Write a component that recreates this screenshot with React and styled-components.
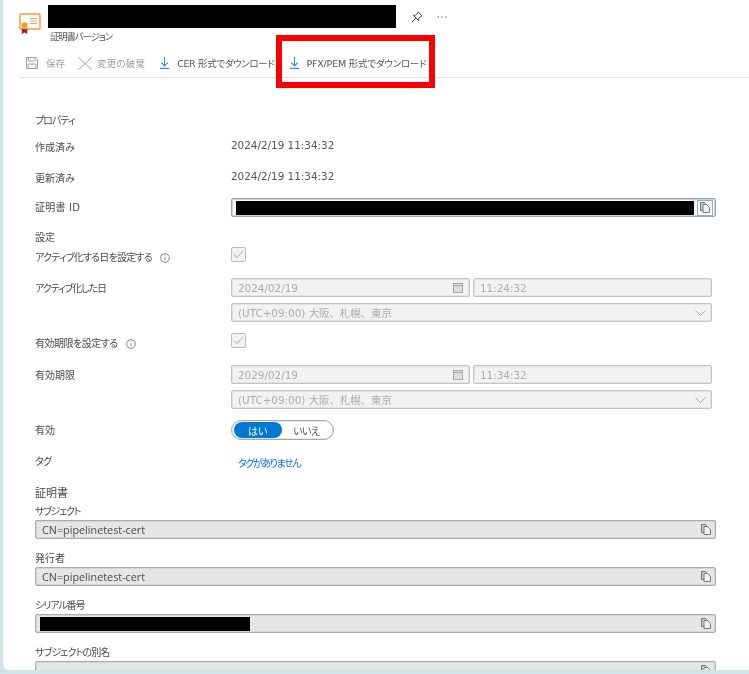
import React from "react";
import styled, { createGlobalStyle } from "styled-components";

const Global = createGlobalStyle`
  html, body { margin: 0; padding: 0; background: #cfe3e8; }
  body { width: 749px; height: 674px; overflow: hidden; }
  * { box-sizing: border-box; }
`;

const Page = styled.div`
  position: relative;
  width: 749px;
  height: 674px;
  background: #cfe3e8;
  overflow: hidden;
  font-family: "DejaVu Sans", "Noto Sans CJK JP", sans-serif;
  font-feature-settings: "palt";
  font-size: 10px;
  color: #4a4a4a;
`;

const Card = styled.div`
  margin-left: 3px;
  height: 670px;
  background: #fff;
  border-bottom-left-radius: 6px;
  overflow: hidden;
  filter: blur(0.35px);
`;

const Header = styled.header`
  display: flex;
  height: 50px;
  padding: 5px 0 0 16px;
`;

const CertBox = styled.div`
  width: 22px;
  margin: 8px 7px 0 0;
`;

const TitleBlock = styled.div`
  width: 348px;
`;

const RedactedTitle = styled.div`
  height: 23px;
  background: #000;
`;

const Subtitle = styled.div`
  margin: 2px 0 0 2px;
  font-size: 9.500px;
  letter-spacing: -1.2px;
  line-height: 14px;
  color: #5c5c5c;
`;

const HeaderActions = styled.div`
  display: flex;
  align-items: center;
  gap: 14px;
  height: 23px;
  margin-left: 15px;
  color: #444;
`;

const Toolbar = styled.nav`
  display: flex;
  align-items: center;
  height: 28px;
  margin-left: 17px;
  padding: 1px 0 2px 6px;
  border-bottom: 1px solid #e1e1e1;
`;

const ToolButton = styled.div`
  display: flex;
  align-items: center;
  gap: ${(p) => p.$gap}px;
  margin-right: ${(p) => p.$after || 0}px;
  font-size: 9.500px;
  letter-spacing: ${(p) => p.$ls || 0}px;
  white-space: nowrap;
  color: ${(p) => (p.$off ? "#a0a0a0" : "#555")};
`;

const Content = styled.main`
  padding: 32px 33px 0 32px;
`;

const SectionTitle = styled.h2`
  height: 20px;
  margin: ${(p) => p.$top || 0}px 0 ${(p) => p.$bottom || 0}px;
  padding-top: 1px;
  font-size: ${(p) => p.$size || 10}px;
  font-weight: 400;
  line-height: 20px;
  letter-spacing: ${(p) => p.$ls || 0}px;
  color: #4a4a4a;
`;

const Row = styled.div`
  display: grid;
  grid-template-columns: 196px 1fr;
  align-items: ${(p) => (p.$center ? "center" : "start")};
  height: ${(p) => (p.$h ? `${p.$h}px` : "auto")};
  margin-top: ${(p) => p.$top || 0}px;
`;

const Label = styled.div`
  display: flex;
  align-items: center;
  gap: 8px;
  font-size: 10px;
  letter-spacing: ${(p) => p.$ls || 0}px;
  line-height: ${(p) => p.$lh || 20}px;
  padding-top: ${(p) => (p.$pt || 0) + 1}px;
  color: #4a4a4a;
`;

const Value = styled.div`
  padding-bottom: 2px;
  font-size: 10.400px;
  line-height: 14px;
  color: #555;
`;

const IdField = styled.div`
  display: flex;
  align-items: center;
  height: 19px;
  padding: 0 2px 0 4px;
  background: #fff;
  border: 1px solid #a6a6a6;
  border-radius: 2px;
  box-shadow: inset 0 0 0 1px #d0d0d0;
`;

const Redacted = styled.div`
  flex: ${(p) => (p.$w ? "none" : "1")};
  width: ${(p) => (p.$w ? `${p.$w}px` : "auto")};
  height: 14px;
  margin-left: ${(p) => p.$ml || 0}px;
  background: #000;
`;

const CopyButton = styled.div`
  display: flex;
  align-items: center;
  justify-content: center;
  width: 16px;
  height: 16px;
  margin-left: 3px;
  border: 1px solid #72b6ec;
  color: #777;
`;

const CheckBox = styled.div`
  display: flex;
  align-items: center;
  justify-content: center;
  width: 15px;
  height: 15px;
  background: #f3f2f1;
  border: 1px solid #bdbdbd;
  border-radius: 2px;
  color: #a8a8a8;
`;

const Stack = styled.div`
  display: flex;
  flex-direction: column;
  gap: 6px;
  padding-right: 4px;
`;

const InputPair = styled.div`
  display: grid;
  grid-template-columns: 239px 239px;
  gap: 3px;
`;

const DisabledInput = styled.div`
  display: flex;
  align-items: center;
  justify-content: space-between;
  height: 19px;
  padding: 0 ${(p) => p.$pr || 6}px 0 6px;
  background: #f3f2f1;
  border: 1px solid #c4c4c4;
  border-radius: 2px;
  box-shadow: inset 0 0 0 0.5px #d4d4d4;
  font-size: 10.400px;
  font-feature-settings: normal;
  color: #adadad;
  white-space: nowrap;
`;

const Toggle = styled.div`
  display: flex;
  align-items: center;
  width: 103px;
  height: 20px;
  padding: 0 2px;
  border: 1px solid #a8a8a8;
  border-radius: 10px;
  box-shadow: inset 0 0 0 0.5px #cfcfcf;
`;

const ToggleOption = styled.div`
  display: flex;
  align-items: center;
  justify-content: center;
  width: ${(p) => (p.$on ? 49 : 51)}px;
  height: 16px;
  border-radius: 8px;
  font-size: 10px;
  letter-spacing: ${(p) => (p.$on ? 0 : -0.6)}px;
  background: ${(p) => (p.$on ? "#0078d4" : "transparent")};
  color: ${(p) => (p.$on ? "#fff" : "#555")};
`;

const TagLink = styled.div`
  padding: 3px 0 0 7px;
  font-size: 10px;
  letter-spacing: -1.4px;
  line-height: 20px;
  color: #0078d4;
`;

const FieldLabel = styled.div`
  height: 14px;
  margin-top: ${(p) => p.$top || 0}px;
  margin-bottom: 2px;
  padding-top: 1px;
  font-size: 10px;
  letter-spacing: ${(p) => p.$ls || 0}px;
  line-height: 14px;
  color: #4a4a4a;
`;

const ReadField = styled.div`
  display: flex;
  align-items: center;
  justify-content: space-between;
  height: 19px;
  padding: 0 4px 0 6px;
  background: #e6e6e6;
  border: 1px solid #acacac;
  border-radius: 2px;
  box-shadow: inset 0 0 0 0.5px #c4c4c4;
  font-family: "Open Sans", "Noto Sans CJK JP", sans-serif;
  font-size: 10.800px;
  color: #4a4a4a;
`;

const RedLine = styled.div`
  position: absolute;
  left: 276px;
  top: 35px;
  width: 159px;
  height: 53px;
  border: 6px solid #fb0000;
`;

const Cert = () => (
  <svg width="22" height="21" viewBox="0 0 22 21" fill="none">
    <rect x="1" y="1" width="20" height="15" rx="1" fill="#fff" stroke="#f39c2e" strokeWidth="1.4" />
    <path d="M11 5.500h7M11 8h7M11 10.500h7" stroke="#f3a95c" strokeWidth="1.1" />
    <path d="M2.800 15v6l2.700-1.600 2.700 1.600v-6z" fill="#a81c2a" />
    <circle cx="5.500" cy="12.500" r="3.400" fill="#f7a01d" stroke="#fff" strokeWidth=".5" />
  </svg>
);
const Pin = () => (
  <svg width="12" height="12" viewBox="0 0 12 12" fill="none" stroke="currentColor" strokeWidth="1">
    <path d="M7.200 1 11 4.800 9.900 5.300 7.900 7.400 7.600 9.600 2.400 4.400 4.600 4.100 6.700 2.100zM4.800 7.200 1 11" />
  </svg>
);
const Dots = () => (
  <svg width="10" height="10" viewBox="0 0 10 10" fill="#666">
    <circle cx="1.200" cy="5" r=".7" /><circle cx="5" cy="5" r=".7" /><circle cx="8.800" cy="5" r=".7" />
  </svg>
);
const Save = () => (
  <svg width="12" height="12" viewBox="0 0 12 12" fill="none" stroke="#a0a0a0" strokeWidth="1">
    <path d="M.5.500h9.500l1.500 1.500v9.500H.5z" /><path d="M2.500.5v3.500h6.500V.5M2.300 11.500V7h7.400v4.500" />
  </svg>
);
const Cross = () => (
  <svg width="14" height="13" viewBox="0 0 14 13" fill="none" stroke="#a0a0a0" strokeWidth="1">
    <path d="M.5.500l13 12M13.500 .5l-13 12" />
  </svg>
);
const Download = () => (
  <svg width="9" height="12" viewBox="0 0 9 12" fill="none" stroke="#2f8fdc" strokeWidth="1.1">
    <path d="M4.500 0v9M1.200 5.700 4.500 9 7.800 5.700M0 11.400h9" />
  </svg>
);
const Info = () => (
  <svg width="10" height="10" viewBox="0 0 10 10" fill="none" stroke="#666" strokeWidth=".8">
    <circle cx="5" cy="5" r="4.300" /><path d="M5 4.300v3M5 2.500v1" />
  </svg>
);
const Check = () => (
  <svg width="11" height="9" viewBox="0 0 11 9" fill="none" stroke="currentColor" strokeWidth="1">
    <path d="M1 4.500 4 7.500 10 1" />
  </svg>
);
const Calendar = () => (
  <svg width="10" height="10" viewBox="0 0 10 10" fill="#ddd" stroke="#a8a8a8" strokeWidth="1">
    <rect x=".5" y=".5" width="9" height="9" /><path d="M.5 2.500h9" />
  </svg>
);
const Chevron = () => (
  <svg width="11" height="6" viewBox="0 0 11 6" fill="none" stroke="#a8a8a8" strokeWidth="1">
    <path d="M.5.500l5 5 5-5" />
  </svg>
);
const Copy = () => (
  <svg width="10" height="11" viewBox="0 0 10 11" fill="none" stroke="#777" strokeWidth="1">
    <path d="M.5.500h4l1 1v7h-5z" fill="#ccc" /><path d="M3 2.500h3.500l3 3v5H3z" fill="#f2f2f2" />
  </svg>
);

const DateGroup = ({ date, time }) => (
  <Stack>
    <InputPair>
      <DisabledInput>{date}<Calendar /></DisabledInput>
      <DisabledInput>{time}</DisabledInput>
    </InputPair>
    <DisabledInput $pr={5}>(UTC+09:00) 大阪、札幌、東京<Chevron /></DisabledInput>
  </Stack>
);

export default function App() {
  return (
    <Page>
      <Global />
      <Card>
        <Header>
          <CertBox><Cert /></CertBox>
          <TitleBlock>
            <RedactedTitle />
            <Subtitle>証明書バージョン</Subtitle>
          </TitleBlock>
          <HeaderActions><Pin /><Dots /></HeaderActions>
        </Header>
        <Toolbar>
          <ToolButton $off $gap={8} $after={13}><Save />保存</ToolButton>
          <ToolButton $off $gap={5} $after={15} $ls={0.2}><Cross />変更の破棄</ToolButton>
          <ToolButton $gap={8} $after={15} $ls={-0.35}><Download />CER 形式でダウンロード</ToolButton>
          <ToolButton $gap={8} $ls={-0.2}><Download />PFX/PEM 形式でダウンロード</ToolButton>
        </Toolbar>
        <Content>
          <SectionTitle $ls={-1}>プロパティ</SectionTitle>
          <Row $h={31} $center><Label $pt={3}>作成済み</Label><Value>2024/2/19 11:34:32</Value></Row>
          <Row $h={31} $center><Label $pt={3}>更新済み</Label><Value>2024/2/19 11:34:32</Value></Row>
          <Row $h={31} $center>
            <Label $ls={0.2}>証明書 ID</Label>
            <IdField><Redacted /><CopyButton><Copy /></CopyButton></IdField>
          </Row>
          <SectionTitle $top={4}>設定</SectionTitle>
          <Row $h={20}>
            <Label $ls={-0.8}>アクティブ化する日を設定する<Info /></Label>
            <CheckBox><Check /></CheckBox>
          </Row>
          <Row $top={11}>
            <Label $lh={19} $ls={-1.1}>アクティブ化した日</Label>
            <DateGroup date="2024/02/19" time="11:24:32" />
          </Row>
          <Row $top={11} $h={20}>
            <Label $ls={-0.5}>有効期限を設定する<Info /></Label>
            <CheckBox><Check /></CheckBox>
          </Row>
          <Row $top={12}>
            <Label $lh={19}>有効期限</Label>
            <DateGroup date="2029/02/19" time="11:34:32" />
          </Row>
          <Row $top={11} $h={20}>
            <Label>有効</Label>
            <Toggle>
              <ToggleOption $on>はい</ToggleOption>
              <ToggleOption>いいえ</ToggleOption>
            </Toggle>
          </Row>
          <Row $top={11} $h={20}>
            <Label $ls={-0.8}>タグ</Label>
            <TagLink>タグがありません</TagLink>
          </Row>
          <SectionTitle $top={12} $bottom={1} $size={11}>証明書</SectionTitle>
          <FieldLabel $ls={-1.3}>サブジェクト</FieldLabel>
          <ReadField>CN=pipelinetest-cert<Copy /></ReadField>
          <FieldLabel $top={12}>発行者</FieldLabel>
          <ReadField>CN=pipelinetest-cert<Copy /></ReadField>
          <FieldLabel $top={12} $ls={-1.1}>シリアル番号</FieldLabel>
          <ReadField><Redacted $w={210} $ml={-2} /><Copy /></ReadField>
          <FieldLabel $top={12} $ls={-0.9}>サブジェクトの別名</FieldLabel>
          <ReadField><span /><Copy /></ReadField>
        </Content>
      </Card>
      <RedLine />
    </Page>
  );
}
